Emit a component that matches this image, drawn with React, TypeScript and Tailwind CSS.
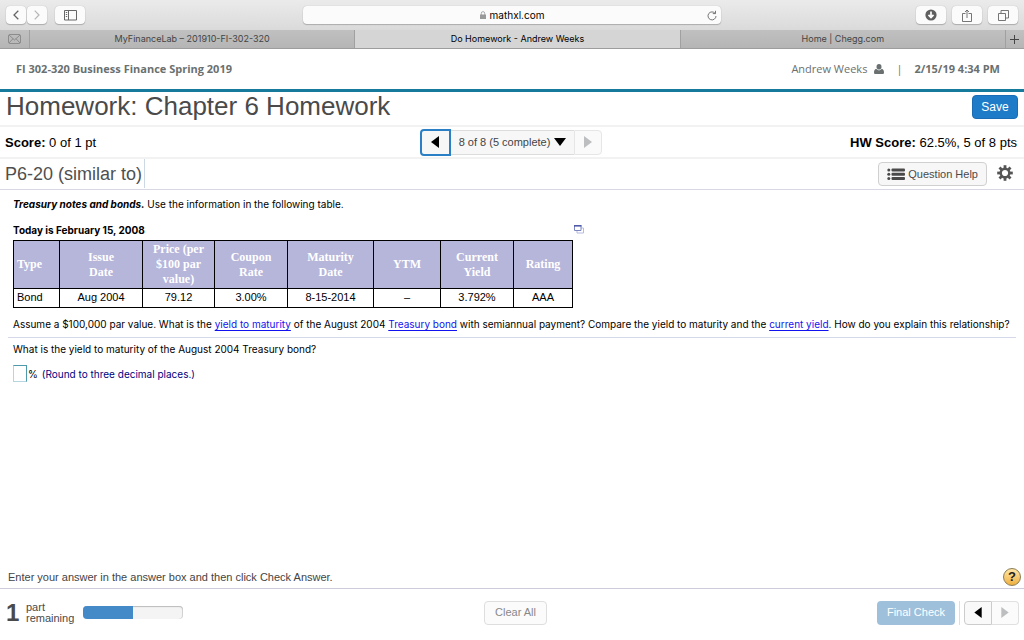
import React from "react";

const toolButton =
  "flex h-[18px] items-center justify-center rounded bg-[#fbfbfb] text-[#666] shadow-[0_0_1px_rgba(0,0,0,0.25),0_1px_1px_rgba(0,0,0,0.2)]";

const sans = "font-['Liberation_Sans',Arial,sans-serif]";
const compact = "font-[Inter,'Liberation_Sans',sans-serif]";

function Triangle({ dir, className }: { dir: "left" | "right" | "down"; className: string }) {
  const points = { left: "8,0 8,12 0,6", right: "0,0 0,12 8,6", down: "0,0 12,0 6,8" }[dir];
  const box = dir === "down" ? "0 0 12 8" : "0 0 8 12";
  return (
    <svg viewBox={box} className={className} fill="currentColor" aria-hidden="true">
      <polygon points={points} />
    </svg>
  );
}

function BrowserToolbar() {
  return (
    <div className="flex h-[30px] items-center bg-linear-to-b from-[#ebebeb] to-[#dadada] px-1.5">
      <div className="flex flex-1 items-center">
        <button aria-label="Back" className={`${toolButton} mr-px w-5`}>
          <svg viewBox="0 0 6 10" className="h-2.5 w-1.5" fill="none" stroke="currentColor" strokeWidth="1.3">
            <path d="M5.3.7 1 5l4.3 4.3" />
          </svg>
        </button>
        <button aria-label="Forward" className={`${toolButton} mr-2 w-5`}>
          <svg viewBox="0 0 6 10" className="h-2.5 w-1.5" fill="none" stroke="#b5b5b5" strokeWidth="1.2">
            <path d="M.7.7 5 5 .7 9.3" />
          </svg>
        </button>
        <button aria-label="Sidebar" className={`${toolButton} w-[30px]`}>
          <svg viewBox="0 0 13 11" className="h-[11px] w-[13px]" fill="none" stroke="currentColor">
            <path d="M.5.5h12v9.500H.5zM4.500.5v9.500M1.800 2.500h1.400M1.800 4.500h1.400M1.800 6.500h1.400" />
          </svg>
        </button>
      </div>
      <div className={`${toolButton} w-[41.4%]`}>
        <div className="flex flex-1 items-center justify-center gap-1 pl-3.5">
          <svg viewBox="0 0 6 8" className="h-2 w-1.5" aria-hidden="true">
            <path d="M1.300 4V2.300a1.700 1.700 0 0 1 3.400 0V4" fill="none" stroke="#999" strokeWidth=".8" />
            <path d="M0 3.500h6V8H0z" fill="#999" />
          </svg>
          <span className="text-[10px] text-black">mathxl.com</span>
        </div>
        <button aria-label="Reload" className="mr-1">
          <svg viewBox="0 0 10 11" className="h-[11px] w-2.5" fill="none" stroke="currentColor" strokeWidth=".9">
            <path d="M8.200 3.500A4 4 0 1 0 9 6M5.800 3.600h2.700V.8" />
          </svg>
        </button>
      </div>
      <div className="flex flex-1 items-center justify-end gap-1.5">
        <button aria-label="Downloads" className={`${toolButton} w-[30px]`}>
          <svg viewBox="0 0 12 12" className="h-3 w-3">
            <circle cx="6" cy="6" r="5.600" fill="#5f5f5f" />
            <path d="M6 2.600v5M3.500 5.800 6 8.500l2.500-2.700" fill="none" stroke="#fff" strokeWidth="1.700" />
          </svg>
        </button>
        <button aria-label="Share" className={`${toolButton} w-[30px]`}>
          <svg viewBox="0 0 10 13" className="h-[13px] w-2.5" fill="none" stroke="currentColor" strokeWidth=".9">
            <path d="M3.500 4.500h-3v8h9v-8h-3M5 9V1M3 3l2-2 2 2" />
          </svg>
        </button>
        <button aria-label="Show all tabs" className={`${toolButton} w-[30px]`}>
          <svg viewBox="0 0 11 11" className="h-[11px] w-[11px]" fill="none" stroke="currentColor" strokeWidth=".9">
            <path d="M.5 3.500h7v7h-7zM3 3.300V.5h7.500V8H7.700" />
          </svg>
        </button>
      </div>
    </div>
  );
}

function BrowserTabs() {
  const tab = "flex flex-1 items-center justify-center border-r border-[#a0a0a0]";
  return (
    <div className="flex h-[19px] border-b border-[#9d9d9d] bg-linear-to-b from-[#c0c0c0] to-[#b5b5b5] text-[9px] text-[#444]">
      <button aria-label="Mail" className="flex w-[30px] items-center justify-center border-r border-[#a0a0a0] text-[#8c8c8c]">
        <svg viewBox="0 0 13 10" className="h-2.5 w-[13px]" fill="none" stroke="currentColor">
          <rect x=".5" y=".5" width="12" height="9" rx="1.500" />
          <path d="m1 1 5.500 5L12 1M1 9l4-4.300M12 9 8 4.700" />
        </svg>
      </button>
      <button className={tab}>MyFinanceLab – 201910-FI-302-320</button>
      <button className={`${tab} bg-[#d5d5d5] text-black`}>Do Homework - Andrew Weeks</button>
      <button className={tab}>Home | Chegg.com</button>
      <button aria-label="New tab" className="flex w-[18px] items-center justify-center">
        <svg viewBox="0 0 9 9" className="h-[9px] w-[9px]" stroke="currentColor" strokeWidth="1">
          <path d="M4.500 0v9M0 4.500h9" />
        </svg>
      </button>
    </div>
  );
}

const columns = [
  { label: "Type", value: "Bond", width: "w-[46px]", pad: "px-[3px] text-left" },
  { label: "Issue Date", value: "Aug 2004", width: "w-[83px]", pad: "px-4" },
  { label: "Price (per $100 par value)", value: "79.12", width: "w-[72px]", pad: "px-1" },
  { label: "Coupon Rate", value: "3.00%", width: "w-[73px]", pad: "px-1" },
  { label: "Maturity Date", value: "8-15-2014", width: "w-[86px]", pad: "px-4" },
  { label: "YTM", value: "–", width: "w-[67px]", pad: "px-1" },
  { label: "Current Yield", value: "3.792%", width: "w-[73px]", pad: "px-1" },
  { label: "Rating", value: "AAA", width: "w-[59px]", pad: "px-1" },
];

function BondTable() {
  return (
    <table className="w-[560px] table-fixed border-collapse text-center">
      <thead>
        <tr className="h-12 bg-[#b6b5da] font-['Liberation_Serif','Times_New_Roman',serif] text-xs leading-[15px] text-white">
          {columns.map((c) => (
            <th key={c.label} className={`${c.width} ${c.pad} border border-black font-bold`}>
              {c.label}
            </th>
          ))}
        </tr>
      </thead>
      <tbody>
        <tr className={`h-[19px] text-[11px] leading-4 ${sans}`}>
          {columns.map((c) => (
            <td key={c.label} className={`${c.pad} border border-black pb-0.5 whitespace-nowrap`}>
              {c.value}
            </td>
          ))}
        </tr>
      </tbody>
    </table>
  );
}

function Term({ children }: { children: React.ReactNode }) {
  return (
    <a href="#" className="text-[#1212f0] underline underline-offset-2">
      {children}
    </a>
  );
}

export default function App() {
  return (
    <div className={`flex min-h-screen flex-col bg-white text-black ${sans}`}>
      <div className="font-[Inter,sans-serif]">
        <BrowserToolbar />
        <BrowserTabs />
      </div>

      <header className="flex h-[43px] items-center justify-between border-b-3 border-[#157a9c] pr-6 pl-4 font-['Open_Sans',sans-serif] text-[11px] text-[#6a7070]">
        <span className="font-bold">FI 302-320 Business Finance Spring 2019</span>
        <div className="flex items-center">
          <span>Andrew Weeks</span>
          <svg viewBox="0 0 10 10" className="ml-[7px] h-2.5 w-2.5" fill="currentColor" aria-hidden="true">
            <ellipse cx="5" cy="2.800" rx="2.500" ry="2.800" />
            <path d="M2.200 4.800C.8 5 0 6.500 0 8.500 0 9.500.6 10 1.500 10h7c.9 0 1.500-.5 1.500-1.500 0-2-.8-3.500-2.200-3.700C7.200 5.700 6.200 6.300 5 6.300s-2.200-.6-2.800-1.500z" />
          </svg>
          <span className="mx-3 text-[#8b6b60]">|</span>
          <span className="font-bold">2/15/19 4:34 PM</span>
        </div>
      </header>

      <div className="flex h-[35px] items-center justify-between border-b-2 border-[#f2f2f2] pr-1.5 pl-1.5">
        <h1 className="pb-1.5 text-[26px] leading-7 text-[#4a4a4a]">Homework: Chapter 6 Homework</h1>
        <button className="mb-1 h-6 w-[46px] rounded-sm border border-[#1a6db5] bg-[#1d7bc8] text-xs leading-4 text-white">
          Save
        </button>
      </div>

      <div className="flex h-8 items-center border-b-2 border-[#f2f2f2] pr-[7px] pl-[5px] text-[13px]">
        <div className="flex-1 pt-0.5">
          <b>Score:</b> 0 of 1 pt
        </div>
        <div className="flex items-center">
          <button aria-label="Previous question" className="flex h-[27px] w-[31px] items-center justify-center rounded-l border-2 border-[#2b80c5] bg-[#f7f7f7]">
            <Triangle dir="left" className="h-3 w-2" />
          </button>
          <button className="flex h-[25px] items-center gap-1 border-y border-[#dcdcdc] bg-[#f7f7f7] px-2 text-[11px] whitespace-nowrap text-[#444]">
            8 of 8 (5 complete)
            <Triangle dir="down" className="h-2 w-3 text-black" />
          </button>
          <button aria-label="Next question" className="flex h-[25px] w-7 items-center justify-center rounded-r border border-[#e6e6e6] bg-[#fafafa] text-[#bcbec0]">
            <Triangle dir="right" className="h-3 w-2" />
          </button>
        </div>
        <div className="flex-1 pt-0.5 text-right">
          <b>HW Score:</b> 62.5%, 5 of 8 pts
        </div>
      </div>

      <div className="flex h-[31px] items-center justify-between border-b border-[#d8d8e4] pr-[11px]">
        <h2 className="flex h-[29px] items-center self-start border-r border-[#ccd8e4] pr-0.5 pl-[5px] text-lg text-[#4f4f4f]">
          P6-20 (similar to)
        </h2>
        <div className="flex items-center gap-2.5">
          <button className="flex h-6 items-center gap-[3px] rounded-sm border border-[#d0d0d0] bg-[#f7f7f7] px-2 text-[11px] text-[#4a4a4a]">
            <svg viewBox="0 0 18 12" className="h-3 w-[18px]" fill="currentColor" aria-hidden="true">
              <rect x="4.500" y=".5" width="13.500" height="3" rx="1" />
              <rect x="4.500" y="4.700" width="13.500" height="3" rx="1" />
              <rect x="4.500" y="8.900" width="13.500" height="3" rx="1" />
              <circle cx="1.800" cy="2" r="1.500" />
              <circle cx="1.800" cy="6.200" r="1.500" />
              <circle cx="1.800" cy="10.400" r="1.500" />
            </svg>
            Question Help
          </button>
          <button aria-label="Settings" className="pb-0.5 text-[#555]">
            <svg viewBox="-8 -8 16 16" className="h-4 w-4" fill="none" stroke="currentColor">
              <circle r="4.300" strokeWidth="2.400" />
              {[0, 45, 90, 135, 180, 225, 270, 315].map((a) => (
                <path key={a} d="M0-5V-7.800" strokeWidth="2.800" transform={`rotate(${a})`} />
              ))}
            </svg>
          </button>
        </div>
      </div>

      <main className={`flex-1 px-2 pt-1.5 text-[10px] leading-4 ${compact}`}>
        <p className="px-[5px]">
          <b className="italic">Treasury notes and bonds.</b> Use the information in the following table.
        </p>
        <div className="mt-2.5 flex w-[576px] items-center justify-between pl-[5px]">
          <b>Today is February 15, 2008</b>
          <button aria-label="Open table in a new window" className="pb-0.5">
            <svg viewBox="0 0 10 9" className="h-[9px] w-2.5" fill="#fff">
              <path d="M3 3h6.500v5H3z" stroke="#b5bbe0" />
              <path d="M.5.5H7v5H.5z" stroke="#7c86c2" />
              <path d="M0 .8h7.500" stroke="#4f5ba8" strokeWidth="1.600" />
            </svg>
          </button>
        </div>
        <div className="mt-0.5 pl-[5px]">
          <BondTable />
        </div>
        <p className="mt-2 border-b border-[#d5d8e8] px-[5px] pb-[5px]">
          Assume a $100,000 par value. What is the <Term>yield to maturity</Term> of the August 2004{" "}
          <Term>Treasury bond</Term> with semiannual payment? Compare the yield to maturity and the{" "}
          <Term>current yield</Term>. How do you explain this relationship?
        </p>
        <p className="mt-[3px] px-[5px]">What is the yield to maturity of the August 2004 Treasury bond?</p>
        <label className="mt-2 flex items-center px-[5px]">
          <input
            aria-label="Yield to maturity, percent"
            className="mr-px h-[17px] w-3.5 border border-[#b5d5e0] border-t-[#4d9aab] border-r-[#4d9aab] outline-none"
          />
          %<span className="ml-1 text-[#000080]">(Round to three decimal places.)</span>
        </label>
      </main>

      <div className="flex items-center justify-between border-b border-[#ccccdc] pr-[3px] pb-0.5 pl-2 text-[11px] text-[#444]">
        <span>Enter your answer in the answer box and then click Check Answer.</span>
        <button
          aria-label="Help"
          className="flex h-[18px] w-[18px] items-center justify-center rounded-full border border-[#8c7c54] bg-linear-to-b from-[#fde7a5] to-[#efb03c] text-[13px] leading-4 font-bold text-[#222]"
        >
          ?
        </button>
      </div>

      <footer className="flex h-[51px] items-center pr-[5px] pb-1 pl-1.5 text-[11px] text-[#4a4a4a]">
        <div className="flex flex-1 items-center">
          <span className="w-5 text-2xl font-bold">1</span>
          <span className="w-[57px] leading-[11px]">
            <span className="block">part</span>
            <span className="block">remaining</span>
          </span>
          <div
            role="progressbar"
            aria-label="Parts completed"
            aria-valuenow={50}
            className="h-[13px] w-[100px] overflow-hidden rounded-sm bg-[#f4f4f4] shadow-[inset_0_1px_1px_#bbb,inset_-1px_0_0_#d5d5d5]"
          >
            <div className="h-full w-1/2 bg-[#448ac8]" />
          </div>
        </div>
        <button className="ml-1.5 h-6 rounded-sm border border-[#dedede] bg-[#fbfbfb] px-2.5 text-[#888]">Clear All</button>
        <div className="flex flex-1 items-center justify-end">
          <button className="h-6 rounded-sm bg-[#9fc0db] px-2.5 text-white">Final Check</button>
          <div className="mx-1 h-6 w-px bg-[#ddd]" />
          <button aria-label="Previous part" className="flex h-6 w-7 items-center justify-center rounded-l-sm border border-[#ccc] bg-[#f9f9f9] text-black">
            <Triangle dir="left" className="h-[11px] w-2" />
          </button>
          <button aria-label="Next part" className="flex h-6 w-[27px] items-center justify-center rounded-r-sm border border-l-0 border-[#e0e0e0] bg-[#fbfbfb] text-[#bcbec0]">
            <Triangle dir="right" className="h-[11px] w-2" />
          </button>
        </div>
      </footer>
    </div>
  );
}
